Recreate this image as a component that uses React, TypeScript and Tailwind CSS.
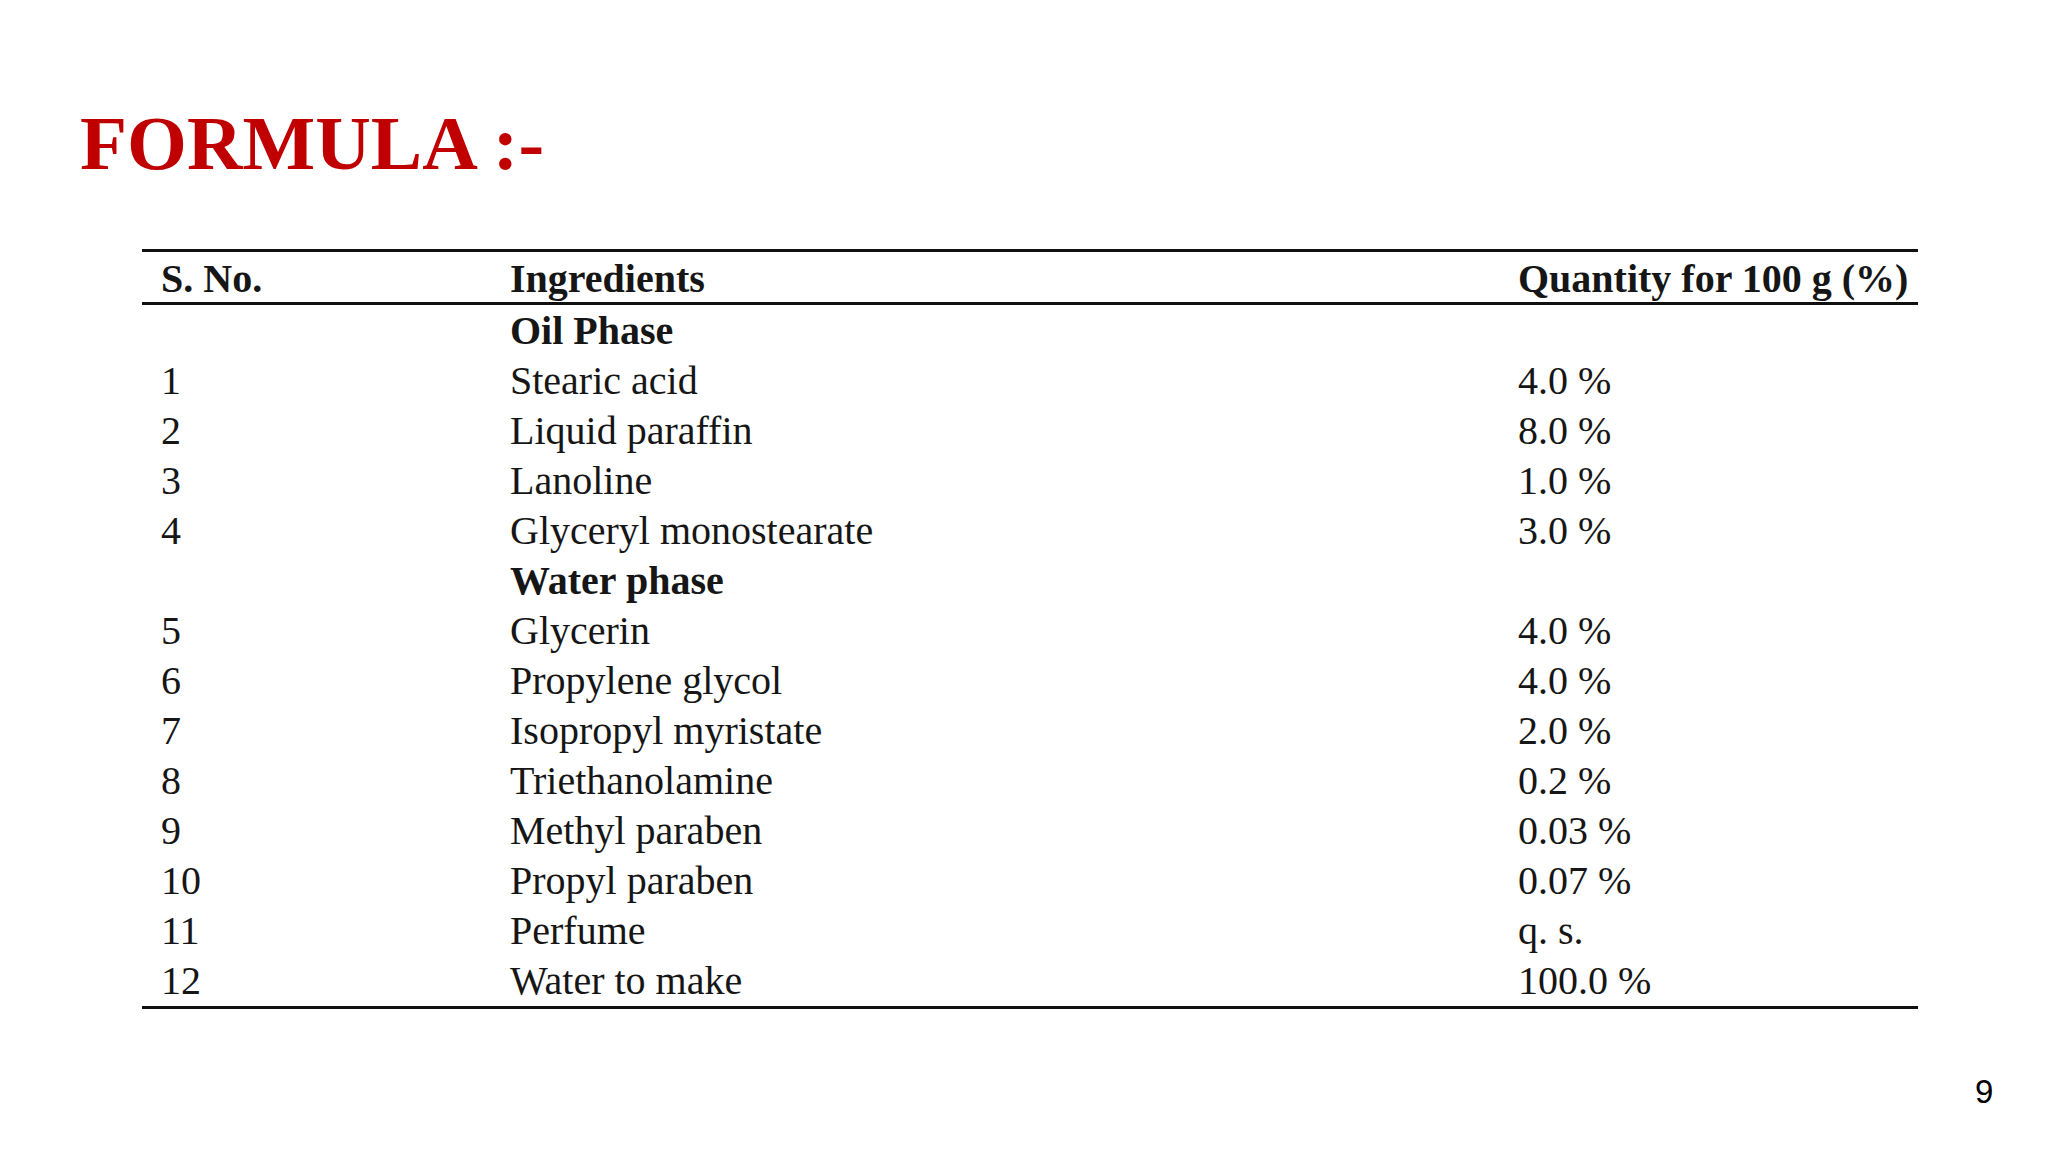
const rows: { no?: string; name: string; qty?: string; heading?: boolean }[] = [
  { name: "Oil Phase", heading: true },
  { no: "1", name: "Stearic acid", qty: "4.0 %" },
  { no: "2", name: "Liquid paraffin", qty: "8.0 %" },
  { no: "3", name: "Lanoline", qty: "1.0 %" },
  { no: "4", name: "Glyceryl monostearate", qty: "3.0 %" },
  { name: "Water phase", heading: true },
  { no: "5", name: "Glycerin", qty: "4.0 %" },
  { no: "6", name: "Propylene glycol", qty: "4.0 %" },
  { no: "7", name: "Isopropyl myristate", qty: "2.0 %" },
  { no: "8", name: "Triethanolamine", qty: "0.2 %" },
  { no: "9", name: "Methyl paraben", qty: "0.03 %" },
  { no: "10", name: "Propyl paraben", qty: "0.07 %" },
  { no: "11", name: "Perfume", qty: "q. s." },
  { no: "12", name: "Water to make", qty: "100.0 %" },
];

export default function App() {
  return (
    <div className="relative w-full h-[1152px] bg-white overflow-hidden">
      {/* Title */}
      <h1 className="pl-[80px] pt-[105px] text-[77px] leading-[77px] font-bold text-[#c00000] font-['Liberation_Serif',serif]">
        FORMULA :-
      </h1>

      {/* Formula table */}
      <div className="ml-[142px] mt-[67px] w-[1776px] border-t-[3px] border-b-[3px] border-[#111] font-['Liberation_Serif',serif] text-[40px] leading-[50px] text-[#161616]">
        <div className="grid grid-cols-[349px_1008px_1fr] pl-[19px] h-[53px] pt-[2px] font-bold border-b-[3px] border-[#111]">
          <span>S. No.</span>
          <span>Ingredients</span>
          <span>Quantity for 100 g (%)</span>
        </div>
        <div className="pt-[1px]">
          {rows.map((r, i) => (
            <div key={i} className="grid grid-cols-[349px_1008px_1fr] pl-[19px] h-[50px]">
              <span>{r.no}</span>
              <span className={r.heading ? "font-bold" : ""}>{r.name}</span>
              <span>{r.qty}</span>
            </div>
          ))}
        </div>
      </div>

      {/* Slide number */}
      <div className="absolute left-[1975px] top-[1075px] text-[33px] leading-[33px] text-black font-['Liberation_Sans',sans-serif]">
        9
      </div>
    </div>
  );
}
